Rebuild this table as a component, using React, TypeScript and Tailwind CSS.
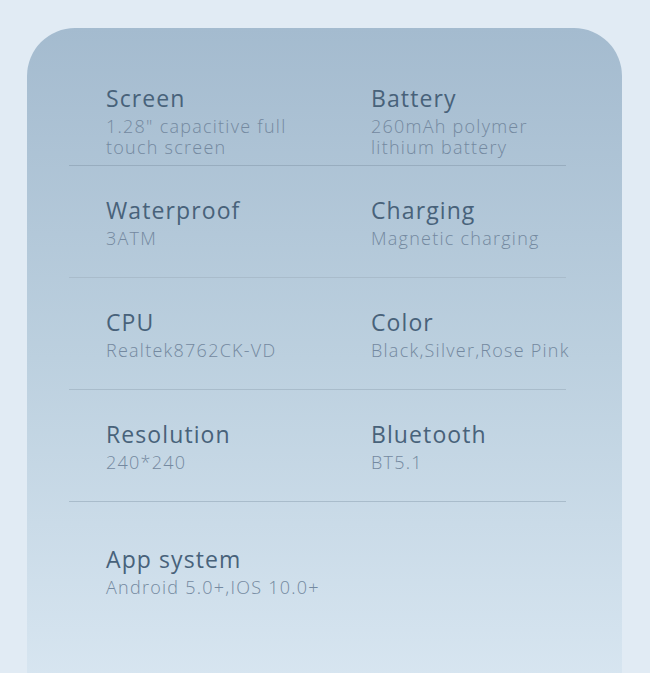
const specs = [
  [
    { label: 'Screen', value: '1.28" capacitive full\ntouch screen' },
    { label: 'Battery', value: '260mAh polymer\nlithium battery' },
  ],
  [
    { label: 'Waterproof', value: '3ATM' },
    { label: 'Charging', value: 'Magnetic charging' },
  ],
  [
    { label: 'CPU', value: 'Realtek8762CK-VD' },
    { label: 'Color', value: 'Black,Silver,Rose Pink' },
  ],
  [
    { label: 'Resolution', value: '240*240' },
    { label: 'Bluetooth', value: 'BT5.1' },
  ],
];

function Spec({ label, value }: { label: string; value: string }) {
  return (
    <div className="whitespace-pre">
      <div className="text-[23px] leading-[28px] tracking-[1.1px] text-[#48627a]">{label}</div>
      <div className="mt-[4px] text-[18px] leading-[21px] font-light tracking-[1.25px] text-[#7489a0]">{value}</div>
    </div>
  );
}

export default function App() {
  return (
    <div
      className="min-h-[673px] w-[650px] overflow-hidden bg-[#e1ebf4] pt-[28px] pl-[27px]"
      style={{ fontFamily: '"Open Sans", "Noto Sans", sans-serif' }}
    >
      <div className="h-[660px] w-[595px] rounded-t-[48px] bg-gradient-to-b from-[#a4bbcf] via-[#bcd0df] to-[#d8e6f1] px-[42px] pt-[56px]">
        <div className="w-[497px]">
          {specs.map((row, i) => (
            <div key={i} className={i === 0 ? 'h-[82px] border-b border-[#98adbf]' : 'h-[112px] border-b border-[#a9bccb] pt-[30px]'}>
              <div className="flex pl-[37px]">
                <div className="w-[265px] shrink-0">
                  <Spec {...row[0]} />
                </div>
                <Spec {...row[1]} />
              </div>
            </div>
          ))}
          <div className="pt-[43px] pl-[37px]">
            <Spec label="App system" value="Android 5.0+,IOS 10.0+" />
          </div>
        </div>
      </div>
    </div>
  );
}
